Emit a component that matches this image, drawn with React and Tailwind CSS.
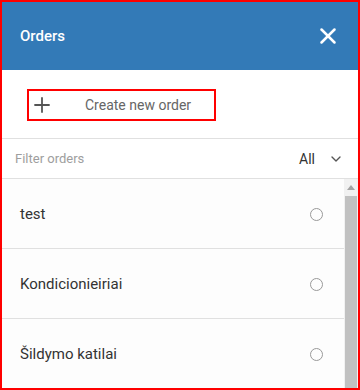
import { X, Plus, ChevronDown } from 'lucide-react';

const orders = ['test', 'Kondicionieiriai', 'Šildymo katilai'];

export default function App() {
  return (
    <div
      className="w-[360px] h-[390px] border-2 border-[#ff0000] bg-white flex flex-col overflow-hidden"
      style={{ fontFamily: 'Roboto, "Noto Sans", sans-serif' }}
    >
      {/* header */}
      <div className="h-[68px] shrink-0 bg-[#337ab7] flex items-center justify-between pl-[18px] pr-[17px]">
        <span className="text-[15px] font-medium text-white">Orders</span>
        <X size={26} strokeWidth={2.3} className="text-white" />
      </div>

      {/* create button */}
      <div className="h-[69px] shrink-0 border-b border-[#e0e0e0] pl-[25px] pt-[19px]">
        <button className="w-[189px] h-[32px] border-2 border-[#ff0000] flex items-center pl-[1px]">
          <Plus size={24} strokeWidth={1.8} className="text-[#555]" />
          <span className="ml-[31px] text-[14px] text-[#666]">Create new order</span>
        </button>
      </div>

      {/* filter */}
      <div className="h-[40px] shrink-0 border-b border-[#e0e0e0] flex items-center pl-[13px] pr-[14px] pt-[1px]">
        <span className="flex-1 text-[13px] text-[#9e9e9e]">Filter orders</span>
        <span className="text-[14px] text-[#333]">All</span>
        <ChevronDown size={16} strokeWidth={2} className="ml-[13px] text-[#555]" />
      </div>

      {/* list */}
      <div className="flex-1 flex min-h-0">
        <div className="flex-1 flex flex-col">
          {orders.map((o) => (
            <div
              key={o}
              className="h-[70px] shrink-0 border-b border-[#e0e0e0] bg-[#fdfdfd] flex items-center pl-[18px] pr-[21px] pt-[1px]"
            >
              <span className="flex-1 text-[15px] text-[#333]">{o}</span>
              <span className="w-[13px] h-[13px] rounded-full border-[1.5px] border-[#999]" />
            </div>
          ))}
        </div>
        <div className="w-[14px] shrink-0 bg-[#f1f1f1] flex flex-col">
          <div className="h-[17px] flex items-center justify-center">
            <svg width="8" height="5" viewBox="0 0 8 5">
              <path d="M0 5 L4 0 L8 5 Z" fill="#a3a3a3" />
            </svg>
          </div>
          <div className="flex-1 mx-[1px] bg-[#c1c1c1]" />
        </div>
      </div>
    </div>
  );
}
